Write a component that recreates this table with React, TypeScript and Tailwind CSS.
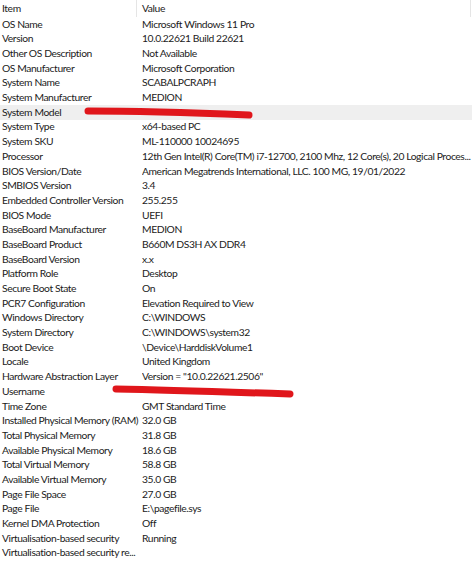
const rows: [string, string][] = [
  ["OS Name", "Microsoft Windows 11 Pro"],
  ["Version", "10.0.22621 Build 22621"],
  ["Other OS Description", "Not Available"],
  ["OS Manufacturer", "Microsoft Corporation"],
  ["System Name", "SCABALPCRAPH"],
  ["System Manufacturer", "MEDION"],
  ["System Model", ""],
  ["System Type", "x64-based PC"],
  ["System SKU", "ML-110000 10024695"],
  ["Processor", "12th Gen Intel(R) Core(TM) i7-12700, 2100 Mhz, 12 Core(s), 20 Logical Proces..."],
  ["BIOS Version/Date", "American Megatrends International, LLC. 100 MG, 19/01/2022"],
  ["SMBIOS Version", "3.4"],
  ["Embedded Controller Version", "255.255"],
  ["BIOS Mode", "UEFI"],
  ["BaseBoard Manufacturer", "MEDION"],
  ["BaseBoard Product", "B660M DS3H AX DDR4"],
  ["BaseBoard Version", "x.x"],
  ["Platform Role", "Desktop"],
  ["Secure Boot State", "On"],
  ["PCR7 Configuration", "Elevation Required to View"],
  ["Windows Directory", "C:\\WINDOWS"],
  ["System Directory", "C:\\WINDOWS\\system32"],
  ["Boot Device", "\\Device\\HarddiskVolume1"],
  ["Locale", "United Kingdom"],
  ["Hardware Abstraction Layer", 'Version = "10.0.22621.2506"'],
  ["Username", ""],
  ["Time Zone", "GMT Standard Time"],
  ["Installed Physical Memory (RAM)", "32.0 GB"],
  ["Total Physical Memory", "31.8 GB"],
  ["Available Physical Memory", "18.6 GB"],
  ["Total Virtual Memory", "58.8 GB"],
  ["Available Virtual Memory", "35.0 GB"],
  ["Page File Space", "27.0 GB"],
  ["Page File", "E:\\pagefile.sys"],
  ["Kernel DMA Protection", "Off"],
  ["Virtualisation-based security", "Running"],
  ["Virtualisation-based security re...", ""],
];

export default function App() {
  return (
    <div className="relative w-[474px] h-[562px] overflow-hidden bg-white text-[#1b1b1b] text-[10.3px] tracking-[-0.4px] font-['Lato',sans-serif]">
      {/* Header */}
      <div className="flex h-[17px] items-center">
        <div className="w-[137px] pl-[2px] border-r border-[#e5e5e5] h-full flex items-center">Item</div>
        <div className="w-[334px] pl-[5px] border-r border-[#e5e5e5] h-full flex items-center">Value</div>
      </div>

      {/* Rows */}
      <div>
        {rows.map(([item, value]) => (
          <div
            key={item}
            className={`flex h-[14.7px] items-center w-[472px] whitespace-nowrap ${
              item === "System Model" ? "bg-[#efefef]" : ""
            }`}
          >
            <div className="w-[142px] shrink-0 pl-[2px]">{item}</div>
            <div className="flex-1 overflow-hidden">{value}</div>
          </div>
        ))}
      </div>

      {/* Red marker scribbles */}
      <svg className="absolute left-0 top-0 pointer-events-none" width="474" height="562">
        <path d="M88 111 C 140 111, 200 113, 249 115" stroke="#e0161b" strokeWidth="7" strokeLinecap="round" fill="none" />
        <path d="M116 389 C 170 390, 230 392, 290 394" stroke="#e0161b" strokeWidth="7" strokeLinecap="round" fill="none" />
      </svg>
    </div>
  );
}
